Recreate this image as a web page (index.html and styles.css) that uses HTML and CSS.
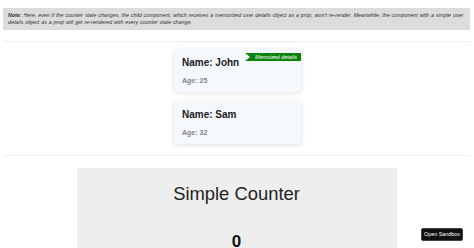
FILE: index.html
```html
<!DOCTYPE html>
<html lang="en">
<head>
    <meta charset="UTF-8">
    <meta name="viewport" content="width=device-width, initial-scale=1.0">
    <title>useMemo demo</title>
    <link rel="stylesheet" href="styles.css">
</head>
<body>
    <div class="page">
        <div class="note">
            <b>Note:</b> Here, even if the counter state changes, the child component, which receives a memorized user details object as a prop, won't re-render. Meanwhile, the component with a simple user details object as a prop will get re-rendered with every counter state change.
        </div>

        <hr class="divider">

        <div class="users">
            <div class="user-card">
                <span class="badge">Memoized details</span>
                <h3>Name: John</h3>
                <p>Age: 25</p>
            </div>
            <div class="user-card">
                <h3>Name: Sam</h3>
                <p>Age: 32</p>
            </div>
        </div>

        <hr class="divider">

        <div class="counter">
            <h2>Simple Counter</h2>
            <div class="count">0</div>
        </div>
    </div>

    <a class="sandbox-button" href="#">Open Sandbox</a>
</body>
</html>
```

FILE: styles.css
```css
body {
    margin: 0;
    font-family: "Liberation Sans", Arial, sans-serif;
    background-color: #fff;
    color: #222;
    overflow: hidden;
}
.page {
    padding: 8px 4px 0 3px;
}
.note {
    background-color: #dcdcdc;
    padding: 4px 2px 4px 5px;
    font-size: 5.3px;
    word-spacing: 0.4px;
    line-height: 7px;
    font-style: italic;
    color: #333;
}
.divider {
    border: none;
    border-top: 1px solid #f0f0f0;
    margin: 11px 0 7px 0;
}
.users {
    display: flex;
    flex-direction: column;
    align-items: center;
    gap: 9px;
}
.user-card {
    position: relative;
    width: 127px;
    box-sizing: border-box;
    padding: 8px 7px 7px 8px;
    margin-left: 2px;
    background-color: #f5f8fc;
    border-radius: 4px;
    box-shadow: 0 1px 5px rgba(0, 0, 0, 0.13);
}
.user-card h3 {
    margin: 0 0 7px 0;
    font-size: 10px;
    line-height: 12px;
    color: #1a1a1a;
}
.user-card p {
    margin: 0;
    font-size: 7px;
    line-height: 9px;
    font-weight: bold;
    color: #858585;
}
.badge {
    position: absolute;
    top: 4px;
    right: 0;
    height: 8px;
    width: 56px;
    box-sizing: border-box;
    padding-left: 10px;
    background-color: #0a830a;
    color: #fff;
    font-size: 5.4px;
    line-height: 8px;
    font-style: italic;
    clip-path: polygon(0 0, 100% 0, 100% 100%, 0 100%, 5px 50%);
}
.divider + .counter {
    margin-top: 12px;
}
.counter {
    width: 320px;
    margin: 0 auto;
    background-color: #eeeeee;
    padding: 15px 0 20px 0;
    text-align: center;
}
.counter h2 {
    margin: 0 0 27px 0;
    font-size: 18.4px;
    line-height: 22px;
    font-weight: normal;
    color: #222;
}
.count {
    font-size: 17px;
    line-height: 20px;
    font-weight: bold;
    color: #111;
}
.sandbox-button {
    position: fixed;
    right: 11px;
    bottom: 7px;
    width: 42px;
    height: 13px;
    box-sizing: border-box;
    background-color: #111;
    border: 1px solid #444;
    border-radius: 2px;
    color: #fff;
    font-size: 5.4px;
    line-height: 11px;
    text-align: center;
    text-decoration: none;
}
```
